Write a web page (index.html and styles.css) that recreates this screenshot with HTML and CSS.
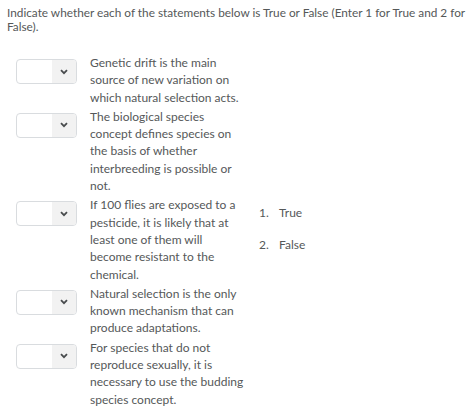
FILE: index.html
```html
<!DOCTYPE html>
<html>
<head>
<meta charset="utf-8">
<link rel="stylesheet" href="styles.css">
</head>
<body>
<p class="title">Indicate whether each of the statements below is True or False (Enter 1 for True and 2 for False).</p>
<div class="main">
  <div class="rows">
    <div class="row">
      <div class="select"><span class="value"></span><span class="arrow"><svg width="8" height="6" viewBox="0 0 8 6"><path d="M1 1.2 L4 4.2 L7 1.2" fill="none" stroke="#494c4e" stroke-width="1.8"/></svg></span></div>
      <div class="stmt">Genetic drift is the main source of new variation on which natural selection acts.</div>
    </div>
    <div class="row">
      <div class="select"><span class="value"></span><span class="arrow"><svg width="8" height="6" viewBox="0 0 8 6"><path d="M1 1.2 L4 4.2 L7 1.2" fill="none" stroke="#494c4e" stroke-width="1.8"/></svg></span></div>
      <div class="stmt">The biological species concept defines species on the basis of whether interbreeding is possible or not.</div>
    </div>
    <div class="row">
      <div class="select"><span class="value"></span><span class="arrow"><svg width="8" height="6" viewBox="0 0 8 6"><path d="M1 1.2 L4 4.2 L7 1.2" fill="none" stroke="#494c4e" stroke-width="1.8"/></svg></span></div>
      <div class="stmt">If 100 flies are exposed to a pesticide, it is likely that at least one of them will become resistant to the chemical.</div>
    </div>
    <div class="row row-wide">
      <div class="select"><span class="value"></span><span class="arrow"><svg width="8" height="6" viewBox="0 0 8 6"><path d="M1 1.2 L4 4.2 L7 1.2" fill="none" stroke="#494c4e" stroke-width="1.8"/></svg></span></div>
      <div class="stmt">Natural selection is the only known mechanism that can produce adaptations.</div>
    </div>
    <div class="row">
      <div class="select"><span class="value"></span><span class="arrow"><svg width="8" height="6" viewBox="0 0 8 6"><path d="M1 1.2 L4 4.2 L7 1.2" fill="none" stroke="#494c4e" stroke-width="1.8"/></svg></span></div>
      <div class="stmt">For species that do not reproduce sexually, it is necessary to use the budding species concept.</div>
    </div>
  </div>
  <ol class="options">
    <li><span class="num">1.</span>True</li>
    <li><span class="num">2.</span>False</li>
  </ol>
</div>
</body>
</html>
```
FILE: styles.css
```css
body {
  margin: 0;
  background: #ffffff;
  color: #555859;
  font-family: Lato, "Open Sans", sans-serif;
  font-size: 12px;
}
.title {
  margin: 0;
  padding: 6px 4px 0 7px;
  font-size: 11.8px;
  line-height: 14px;
}
.main {
  display: flex;
  align-items: center;
  margin-top: 20px;
}
.rows {
  display: flex;
  flex-direction: column;
  gap: 2px;
  padding-left: 16px;
}
.row {
  display: flex;
  align-items: flex-start;
}
.select {
  display: flex;
  width: 61px;
  height: 25px;
  box-sizing: border-box;
  border: 1px solid #d9dcdf;
  border-radius: 4px;
  overflow: hidden;
  margin-top: 5px;
  background: #fff;
  flex: none;
}
.value {
  width: 35px;
}
.arrow {
  flex: 1;
  background: #f2f2f2;
  display: flex;
  align-items: center;
  justify-content: center;
}
.stmt {
  margin-left: 13px;
  width: 156px;
  line-height: 17.3px;
}
.options {
  list-style: none;
  margin: 0 0 4px 13px;
  padding: 0;
  display: flex;
  flex-direction: column;
  gap: 15px;
  line-height: 17px;
}
.num {
  display: inline-block;
  width: 20px;
}
```
